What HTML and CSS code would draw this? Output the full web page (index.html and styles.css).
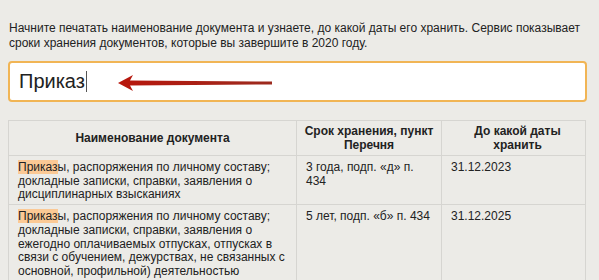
FILE: index.html
```html
<!DOCTYPE html>
<html>
<head lang="ru">
    <meta charset="UTF-8">
    <title>Сроки хранения документов</title>
    <link rel="stylesheet" href="styles.css">
</head>
<body>
    <div id="service">
        <p class="intro">Начните печатать наименование документа и узнаете, до какой даты его хранить. Сервис показывает сроки хранения документов, которые вы завершите в 2020 году.</p>
        <div class="search">
            <span class="query">Приказ</span><span class="caret"></span>
            <svg class="arrow" width="160" height="20" viewBox="0 0 160 20">
                <defs>
                    <linearGradient id="shaft" x1="0" y1="0" x2="1" y2="0">
                        <stop offset="0" stop-color="#b8160c"/>
                        <stop offset="1" stop-color="#9c2a1e"/>
                    </linearGradient>
                </defs>
                <path d="M0 10 L15 2 L12 7.5 L154 8.6 L154 11.4 L12 12.5 L15 18 Z" fill="url(#shaft)"/>
            </svg>
        </div>
        <table id="docs">
            <tr>
                <th class="name">Наименование документа</th>
                <th class="term">Срок хранения, пункт Перечня</th>
                <th class="date">До какой даты хранить</th>
            </tr>
            <tr>
                <td><mark>Приказ</mark>ы, распоряжения по личному составу; докладные записки, справки, заявления о дисциплинарных взысканиях</td>
                <td class="term">3 года, подп. «д» п. 434</td>
                <td>31.12.2023</td>
            </tr>
            <tr>
                <td><mark>Приказ</mark>ы, распоряжения по личному составу; докладные записки, справки, заявления о ежегодно оплачиваемых отпусках, отпусках в связи с обучением, дежурствах, не связанных с основной, профильной) деятельностью</td>
                <td class="term">5 лет, подп. «б» п. 434</td>
                <td>31.12.2025</td>
            </tr>
        </table>
    </div>
</body>
</html>
```
FILE: styles.css
```css
*{padding:0;margin:0}
body{background:#ecebe7;font-family:"Liberation Sans",Arial,sans-serif;color:#222;}
#service{padding:21px 8px 0 8px;width:579px;}
.intro{font-size:12px;line-height:15px;padding-left:1px;}
.search{position:relative;margin-top:10px;height:37px;background:#fff;border:2px solid #f1b555;border-radius:4px;padding-left:9px;display:flex;align-items:center;}
.query{font-size:20px;color:#222;}
.caret{display:inline-block;width:1px;height:21px;background:#555;margin-left:1px;}
.arrow{position:absolute;left:108px;top:10px;}
#docs{margin-top:18px;width:578px;border-collapse:collapse;font-size:12px;line-height:13.7px;}
#docs th,#docs td{border:1px solid #d6d5d1;vertical-align:top;text-align:left;padding:5px 4px 2px 9px;}
#docs td.term{padding-right:6px;}
#docs th{text-align:center;vertical-align:middle;font-weight:bold;line-height:14px;padding:3px 2px;height:28px;}
#docs th.name{width:283px;}
#docs th.term{width:140px;}
#docs th.date{padding:3px 14px 3px 22px;}
mark{background:#fbc995;color:inherit;}
```
